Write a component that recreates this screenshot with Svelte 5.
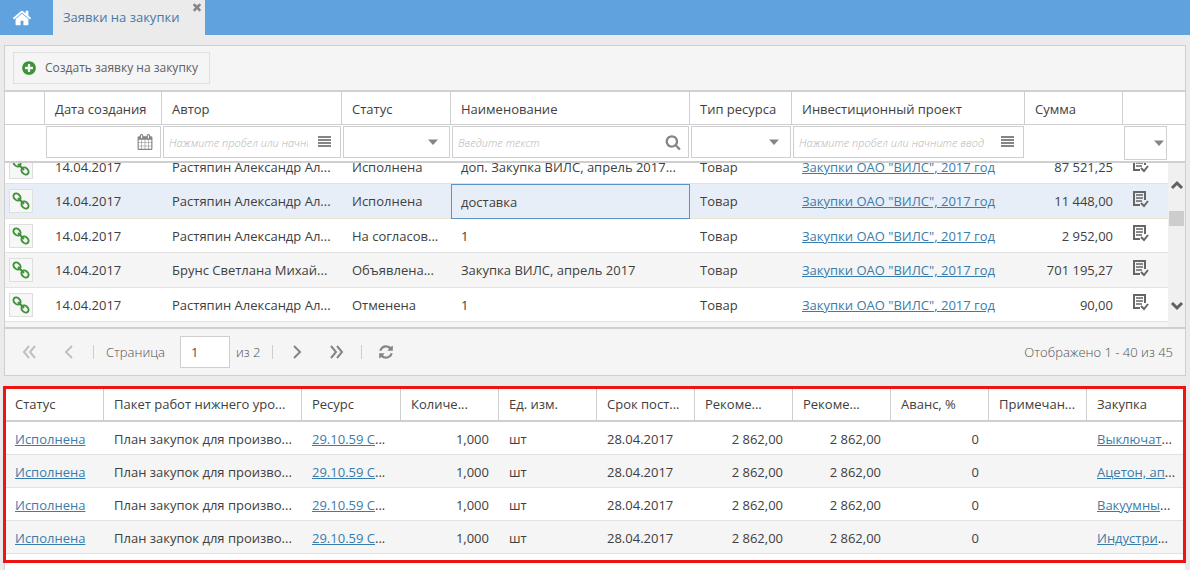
<script lang="ts">
    import { onMount } from "svelte";

    type Request = {
        date: string;
        author: string;
        status: string;
        name: string;
        kind: string;
        project: string;
        sum: string;
    }

    const project = 'Закупки ОАО "ВИЛС", 2017 год';

    const requests: Request[] = [
        { date: "14.04.2017", author: "Растяпин Александр Ал...", status: "Исполнена", name: "доп. Закупка ВИЛС, апрель 2017...", kind: "Товар", project, sum: "87 521,25" },
        { date: "14.04.2017", author: "Растяпин Александр Ал...", status: "Исполнена", name: "доставка", kind: "Товар", project, sum: "11 448,00" },
        { date: "14.04.2017", author: "Растяпин Александр Ал...", status: "На согласов...", name: "1", kind: "Товар", project, sum: "2 952,00" },
        { date: "14.04.2017", author: "Брунс Светлана Михай...", status: "Объявлена...", name: "Закупка ВИЛС, апрель 2017", kind: "Товар", project, sum: "701 195,27" },
        { date: "14.04.2017", author: "Растяпин Александр Ал...", status: "Отменена", name: "1", kind: "Товар", project, sum: "90,00" },
    ];

    const itemColumns = ["Статус", "Пакет работ нижнего уро...", "Ресурс", "Количе...", "Ед. изм.", "Срок пост...", "Рекоме...", "Рекоме...", "Аванс, %", "Примечан...", "Закупка"];
    const purchases = ["Выключат", "Ацетон, ап", "Вакуумны", "Индустри"];

    let selected = $state(1);
    let page = $state("1");
    let viewport: HTMLDivElement;

    onMount(() => {
        viewport.scrollTop = 13;
    });

    const scrollBy = (delta: number) => {
        viewport.scrollTop += delta;
    }

    const icons = {
        home: "M1472 992v480q0 26-19 45t-45 19h-384v-384h-256v384h-384q-26 0-45-19t-19-45v-480q0-1 .5-3t.5-3l575-474 575 474q1 2 1 6zm223-69l-62 74q-8 9-21 11h-3q-13 0-21-7l-692-577-692 577q-12 8-24 7-13-2-21-11l-62-74q-8-10-7-23.5t11-21.5l719-599q32-26 76-26t76 26l244 204v-195q0-14 9-23t23-9h192q14 0 23 9t9 23v408l219 182q10 8 11 21.5t-7 23.5z",
        close: "M1490 1322q0 40-28 68l-136 136q-28 28-68 28t-68-28l-294-294-294 294q-28 28-68 28t-68-28l-136-136q-28-28-28-68t28-68l294-294-294-294q-28-28-28-68t28-68l136-136q28-28 68-28t68 28l294 294 294-294q28-28 68-28t68 28l136 136q28 28 28 68t-28 68l-294 294 294 294q28 28 28 68z",
        plus: "M1344 960v-128q0-26-19-45t-45-19h-256v-256q0-26-19-45t-45-19h-128q-26 0-45 19t-19 45v256h-256q-26 0-45 19t-19 45v128q0 26 19 45t45 19h256v256q0 26 19 45t45 19h128q26 0 45-19t19-45v-256h256q26 0 45-19t19-45zm320-64q0 209-103 385.5t-279.5 279.5-385.5 103-385.5-103-279.5-279.5-103-385.5 103-385.5 279.5-279.5 385.5-103 385.5 103 279.5 279.5 103 385.5z",
        calendar: "M192 1664h288v-288h-288v288zm352 0h320v-288h-320v288zm-352-352h288v-320h-288v320zm352 0h320v-320h-320v320zm-352-384h288v-288h-288v288zm736 736h320v-288h-320v288zm-384-736h320v-288h-320v288zm768 736h288v-288h-288v288zm-384-352h320v-320h-320v320zm-352-864v-288q0-13-9.5-22.5t-22.5-9.5h-64q-13 0-22.5 9.5t-9.5 22.5v288q0 13 9.5 22.5t22.5 9.5h64q13 0 22.5-9.5t9.5-22.5zm736 864h288v-320h-288v320zm-384-384h320v-288h-320v288zm384 0h288v-288h-288v288zm32-480v-288q0-13-9.5-22.5t-22.5-9.5h-64q-13 0-22.5 9.5t-9.5 22.5v288q0 13 9.5 22.5t22.5 9.5h64q13 0 22.5-9.5t9.5-22.5zm384-64v1280q0 52-38 90t-90 38h-1408q-52 0-90-38t-38-90v-1280q0-52 38-90t90-38h128v-96q0-66 47-113t113-47h64q66 0 113 47t47 113v96h384v-96q0-66 47-113t113-47h64q66 0 113 47t47 113v96h128q52 0 90 38t38 90z",
        search: "M1216 832q0-185-131.5-316.5t-316.5-131.5-316.5 131.5-131.5 316.5 131.5 316.5 316.5 131.5 316.5-131.5 131.5-316.5zm512 832q0 52-38 90t-90 38q-54 0-90-38l-343-342q-179 124-399 124-143 0-273.5-55.5t-225-150-150-225-55.5-273.5 55.5-273.5 150-225 225-150 273.5-55.5 273.5 55.5 225 150 150 225 55.5 273.5q0 220-124 399l343 343q37 37 37 90z",
        bars: "M112 224h1456v224h-1456zm0 336h1456v224h-1456zm0 336h1456v224h-1456zm0 336h1456v224h-1456z",
        caret: "M256 576h1280l-640 704z",
        refresh: "M1639 1056q0 5-1 7-64 268-268 434.5t-478 166.5q-146 0-282.5-55t-243.5-157l-129 129q-19 19-45 19t-45-19-19-45v-448q0-26 19-45t45-19h448q26 0 45 19t19 45-19 45l-137 137q71 66 161 102t187 36q134 0 250-65t186-179q11-17 53-117 8-23 30-23h192q13 0 22.5 9.5t9.5 22.5zm25-800v448q0 26-19 45t-45 19h-448q-26 0-45-19t-19-45 19-45l138-138q-148-137-349-137-134 0-250 65t-186 179q-11 17-53 117-8 23-30 23h-199q-13 0-22.5-9.5t-9.5-22.5v-7q65-268 270-434.5t480-166.5q146 0 284 55.5t245 156.5l130-129q19-19 45-19t45 19 19 45z",
    };
</script>

{#snippet icon(path: string, size: number)}
    <svg class="icon" width={size} height={size} viewBox="0 0 1792 1792" aria-hidden="true"><path d={path} /></svg>
{/snippet}

{#snippet line(path: string)}
    <svg class="line" width="16" height="16" viewBox="0 0 16 16" aria-hidden="true"><path d={path} /></svg>
{/snippet}

{#snippet textFilter(label: string, placeholder: string, path: string)}
    <label class="filter">
        <input type="text" aria-label={label} {placeholder}>
        {@render icon(path, 16)}
    </label>
{/snippet}

{#snippet listFilter(label: string)}
    <label class="filter list">
        <select aria-label={label}><option></option></select>
        {@render icon(icons.caret, 14)}
    </label>
{/snippet}

{#snippet requestCols()}
    <col class="w-link"><col class="w-date"><col class="w-author"><col class="w-status"><col>
    <col class="w-kind"><col class="w-project"><col class="w-sum"><col class="w-doc">
{/snippet}

<div class="app">
    <nav class="tabs">
        <button class="home" aria-label="Главная">{@render icon(icons.home, 20)}</button>
        <div class="tab">
            <a href="#requests">Заявки на закупки</a>
            <button class="close" aria-label="Закрыть">{@render icon(icons.close, 12)}</button>
        </div>
    </nav>

    <section class="panel">
        <div class="toolbar">
            <button class="create"><span class="green">{@render icon(icons.plus, 16)}</span>Создать заявку на закупку</button>
        </div>

        <table class="grid head">
            <colgroup>{@render requestCols()}<col class="w-scroll"></colgroup>
            <thead>
                <tr>
                    <th></th>
                    <th>Дата создания</th>
                    <th>Автор</th>
                    <th>Статус</th>
                    <th>Наименование</th>
                    <th>Тип ресурса</th>
                    <th>Инвестиционный проект</th>
                    <th>Сумма</th>
                    <th colspan="2"></th>
                </tr>
                <tr class="filters">
                    <td></td>
                    <td>{@render textFilter("Дата создания", "", icons.calendar)}</td>
                    <td>{@render textFilter("Автор", "Нажмите пробел или начните ввод", icons.bars)}</td>
                    <td>{@render listFilter("Статус")}</td>
                    <td>{@render textFilter("Наименование", "Введите текст", icons.search)}</td>
                    <td>{@render listFilter("Тип ресурса")}</td>
                    <td>{@render textFilter("Инвестиционный проект", "Нажмите пробел или начните ввод", icons.bars)}</td>
                    <td></td>
                    <td class="narrow">{@render listFilter("Документ")}</td>
                    <td></td>
                </tr>
            </thead>
        </table>

        <div class="body">
            <div class="viewport" bind:this={viewport}>
                <table class="grid requests">
                    <colgroup>{@render requestCols()}</colgroup>
                    <tbody>
                        {#each requests as r, i}
                            <tr class:selected={i === selected} onclick={() => selected = i}>
                                <td class="link-cell">
                                    <button class="chain" aria-label="Связи">
                                        <svg width="18" height="18" viewBox="0 0 18 18" aria-hidden="true">
                                            <ellipse cx="5" cy="5" rx="4" ry="3" transform="rotate(45 5 5)" />
                                            <ellipse cx="13" cy="13" rx="4" ry="3" transform="rotate(45 13 13)" />
                                            <path d="M6 6l6 6" />
                                        </svg>
                                    </button>
                                </td>
                                <td>{r.date}</td>
                                <td>{r.author}</td>
                                <td>{r.status}</td>
                                <td class:focused={i === selected}>{r.name}</td>
                                <td>{r.kind}</td>
                                <td><a href="#project">{r.project}</a></td>
                                <td class="num">{r.sum}</td>
                                <td>
                                    <button class="doc" aria-label="Документ">
                                        <svg width="16" height="17" viewBox="0 0 16 17" aria-hidden="true">
                                            <path d="M12 9V1H1v13h6" />
                                            <path class="thin" d="M3 4h7M3 7h7M3 10h6" />
                                            <path d="M8 12l3 3 4-5" />
                                        </svg>
                                    </button>
                                </td>
                            </tr>
                        {/each}
                        <tr><td colspan="9"></td></tr>
                    </tbody>
                </table>
            </div>
            <div class="scrollbar">
                <button aria-label="Вверх" onclick={() => scrollBy(-34)}>{@render line("M3 11l5-5 5 5")}</button>
                <div class="track"><div class="thumb"></div></div>
                <button aria-label="Вниз" onclick={() => scrollBy(34)}>{@render line("M3 5l5 5 5-5")}</button>
            </div>
        </div>

        <div class="pager">
            <button disabled aria-label="Первая">{@render line("M8 2L3 8l5 6M14 2L9 8l5 6")}</button>
            <button disabled aria-label="Предыдущая">{@render line("M11 2L5 8l6 6")}</button>
            <span class="sep"></span>
            <label for="page">Страница</label>
            <input id="page" type="text" bind:value={page}>
            <span class="total">из 2</span>
            <span class="sep"></span>
            <button aria-label="Следующая">{@render line("M5 2l6 6-6 6")}</button>
            <button aria-label="Последняя">{@render line("M2 2l5 6-5 6M8 2l5 6-5 6")}</button>
            <span class="sep"></span>
            <button aria-label="Обновить">{@render icon(icons.refresh, 16)}</button>
            <span class="shown">Отображено 1 - 40 из 45</span>
        </div>
    </section>

    <section class="details">
        <div class="frame">
            <table class="grid items">
                <colgroup>
                    <col class="w-state"><col><col class="w-state">
                    {#each itemColumns.slice(3) as _}<col class="w-item">{/each}
                </colgroup>
                <thead>
                    <tr>
                        {#each itemColumns as title}<th>{title}</th>{/each}
                    </tr>
                </thead>
                <tbody>
                    {#each purchases as purchase}
                        <tr>
                            <td><a href="#item">Исполнена</a></td>
                            <td>План закупок для произво...</td>
                            <td><a href="#resource">29.10.59 С</a>...</td>
                            <td class="num">1,000</td>
                            <td>шт</td>
                            <td>28.04.2017</td>
                            <td class="num">2 862,00</td>
                            <td class="num">2 862,00</td>
                            <td class="num">0</td>
                            <td></td>
                            <td><a href="#purchase">{purchase}</a>...</td>
                        </tr>
                    {/each}
                </tbody>
            </table>
        </div>
    </section>
</div>

<style>
    :global(body) {
        background: #ebebeb;
    }
    .app {
        display: flex;
        flex-direction: column;
        box-sizing: border-box;
        min-height: 100vh;
        font: 13px/18px "Open Sans", "Noto Sans", sans-serif;
        color: #404040;
    }
    button, input, select {
        margin: 0;
        padding: 0;
        border: none;
        background: none;
        font: inherit;
        color: inherit;
    }
    button {
        display: flex;
        align-items: center;
        justify-content: center;
    }
    a {
        color: #3a7cab;
    }
    .icon {
        display: block;
        flex: none;
        fill: currentColor;
    }
    .line {
        fill: none;
        stroke: currentColor;
        stroke-width: 2;
    }

    .tabs {
        display: flex;
        height: 35px;
        background: #5fa2dd;
    }
    .home {
        width: 53px;
        padding-right: 10px;
        color: #fff;
    }
    .tab {
        display: flex;
        align-items: center;
        gap: 12px;
        padding: 0 2px 2px 10px;
        background: #ebebeb;
        a {
            color: #4679a8;
            text-decoration: none;
        }
        .close {
            align-self: flex-start;
            padding-top: 1px;
            color: #858585;
        }
    }

    .panel {
        margin: 10px 4px 0;
        border: 1px solid #cfcfcf;
        background: #f5f5f5;
    }
    .toolbar {
        display: flex;
        padding: 6px 8px;
        border-bottom: 2px solid #d0d0d0;
    }
    .create {
        box-sizing: border-box;
        height: 32px;
        gap: 8px;
        padding: 0 11px 0 7px;
        border: 1px solid #e0e0e0;
        font-size: 12px;
        color: #606060;
        .green {
            color: #3f9338;
        }
    }

    .grid {
        width: 100%;
        table-layout: fixed;
        border-collapse: separate;
        border-spacing: 0;
        background: #fff;
        th, td {
            box-sizing: border-box;
            padding: 0 10px;
            text-align: left;
            font-weight: normal;
            white-space: nowrap;
            overflow: hidden;
        }
        th {
            padding-right: 0;
            border-right: 1px solid #cfcfcf;
        }
        th:last-child {
            border-right: none;
        }
        .num {
            text-align: right;
        }
    }
    .w-link { width: 40px; }
    .w-date { width: 117px; }
    .w-author { width: 180px; }
    .w-status { width: 109px; }
    .w-kind { width: 102px; }
    .w-project { width: 233px; }
    .w-sum { width: 98px; }
    .w-doc { width: 45px; }
    .w-scroll { width: 17px; }
    .w-state { width: 99px; }
    .w-item { width: 98px; }

    .head {
        border-bottom: 2px solid #cfcfcf;
        th {
            height: 33px;
            padding-top: 2px;
            border-bottom: 1px solid #cfcfcf;
        }
        .filters td {
            height: 36px;
            padding: 1px 1px 3px;
            vertical-align: top;
        }
        .filters .narrow {
            padding-bottom: 1px;
        }
    }
    .filter {
        display: flex;
        align-items: center;
        box-sizing: border-box;
        height: 32px;
        padding: 0 7px 0 5px;
        border: 1px solid #cfcfcf;
        color: #858585;
        input, select {
            flex: 1;
            min-width: 0;
            width: 0;
            height: 30px;
            appearance: none;
        }
        input {
            margin-right: 9px;
        }
        input::placeholder {
            color: #b4b4b4;
            font-size: 11px;
            font-style: italic;
            font-weight: 300;
            opacity: 1;
        }
    }
    .list {
        padding-right: 9px;
    }
    .narrow .filter {
        height: 34px;
        padding-right: 0;
    }

    .body {
        display: flex;
        height: 164px;
        border-bottom: 2px solid #cfcfcf;
    }
    .viewport {
        flex: 1;
        min-width: 0;
        overflow: hidden;
    }
    .requests {
        td {
            height: 34px;
            border-bottom: 1px solid #e2e2e2;
        }
        tr:nth-child(even) td {
            height: 35px;
            background: #f5f5f5;
        }
        tr.selected:nth-child(n) td {
            background: #e8eef7;
            border-bottom-color: #e6e3cf;
        }
        tr.selected:nth-child(n) td.focused {
            padding-left: 9px;
            border: 1px solid #5a94c4;
        }
        .link-cell {
            padding: 0 4px;
        }
    }
    .chain {
        box-sizing: border-box;
        width: 24px;
        height: 24px;
        border: 1px solid #dedede;
        background: #f7f7f7;
        svg {
            fill: none;
            stroke: #3f9338;
            stroke-width: 2;
        }
    }
    .doc {
        padding-bottom: 4px;
        svg {
            fill: none;
            stroke: #666;
            stroke-width: 2;
        }
        .thin {
            stroke-width: 1.5;
        }
    }
    .scrollbar {
        display: flex;
        flex-direction: column;
        width: 17px;
        padding: 13px 0;
        background: #f0f0f0;
        color: #606060;
        button {
            height: 17px;
        }
        .line {
            stroke-width: 3;
        }
        .track {
            flex: 1;
            padding-top: 18px;
        }
        .thumb {
            height: 15px;
            margin: 0 1px;
            background: #cdcdcd;
        }
    }

    .pager {
        display: flex;
        align-items: center;
        height: 46px;
        padding: 0 12px 0 4px;
        color: #505050;
        font-weight: 300;
        button {
            width: 40px;
            height: 32px;
            color: #858585;
        }
        button:disabled {
            color: #c0c0c0;
        }
        .sep {
            width: 1px;
            height: 14px;
            margin: 0 4px;
            background: #cfcfcf;
        }
        label {
            margin: 0 15px 0 8px;
        }
        input {
            box-sizing: border-box;
            width: 50px;
            height: 32px;
            padding: 0 10px;
            border: 1px solid #cfcfcf;
            background: #fff;
            font-weight: 400;
        }
        .total {
            margin: 0 8px 0 6px;
        }
        .shown {
            margin-left: auto;
        }
    }

    .details {
        flex: 1;
        margin: 11px 5px 0 4px;
        border-left: 1px solid #cfcfcf;
        background: #fff;
    }
    .frame {
        position: relative;
        padding-bottom: 9px;
    }
    /* red marker lies over the edges of the grid */
    .frame::after {
        content: "";
        position: absolute;
        inset: -1px -1px 0 -2px;
        border: 3px solid #ee1414;
        pointer-events: none;
    }
    .items {
        th {
            height: 35px;
            border-bottom: 2px solid #cfcfcf;
        }
        td {
            height: 33px;
            padding-top: 2px;
            border-bottom: 1px solid #e2e2e2;
        }
        tbody tr:nth-child(even) td {
            background: #f5f5f5;
        }
    }
</style>
